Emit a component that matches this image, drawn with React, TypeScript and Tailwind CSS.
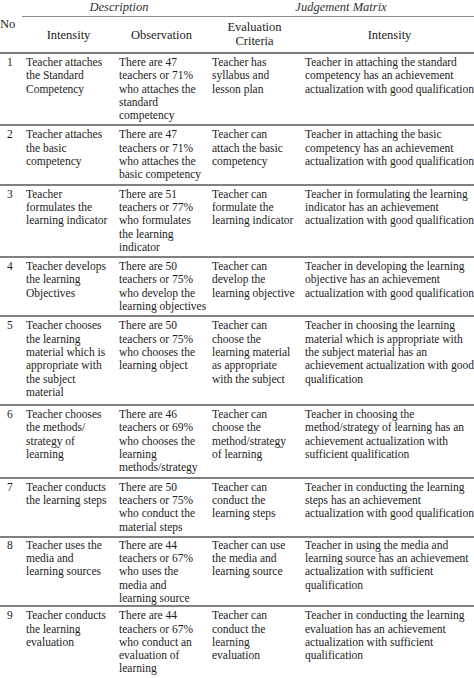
import React from 'react'

type Row = { no: string; a: string[]; b: string[]; c: string[]; d: string[]; pad?: string }

const rows: Row[] = [
  {
    no: '1',
    a: ['Teacher attaches', 'the Standard', 'Competency'],
    b: ['There are 47', 'teachers or 71%', 'who attaches the', 'standard', 'competency'],
    c: ['Teacher has', 'syllabus and', 'lesson plan'],
    d: ['Teacher in attaching the standard', 'competency has an achievement', 'actualization with good qualification.'],
  },
  {
    no: '2',
    a: ['Teacher attaches', 'the basic', 'competency'],
    b: ['There are 47', 'teachers or 71%', 'who attaches the', 'basic competency'],
    c: ['Teacher can', 'attach the basic', 'competency'],
    d: ['Teacher in attaching the basic', 'competency has an achievement', 'actualization with good qualification.'],
  },
  {
    no: '3',
    a: ['Teacher', 'formulates the', 'learning indicator'],
    b: ['There are 51', 'teachers or 77%', 'who formulates', 'the learning', 'indicator'],
    c: ['Teacher can', 'formulate the', 'learning indicator'],
    d: ['Teacher in formulating the learning', 'indicator has an achievement', 'actualization with good qualification.'],
  },
  {
    no: '4',
    a: ['Teacher develops', 'the learning', 'Objectives'],
    b: ['There are 50', 'teachers or 75%', 'who develop the', 'learning objectives'],
    c: ['Teacher can', 'develop the', 'learning objective'],
    d: ['Teacher in developing the learning', 'objective has an achievement', 'actualization with good qualification.'],
  },
  {
    no: '5',
    a: ['Teacher chooses', 'the learning', 'material which is', 'appropriate with', 'the subject', 'material'],
    b: ['There are 50', 'teachers or 75%', 'who chooses the', 'learning object'],
    c: ['Teacher can', 'choose the', 'learning material', 'as appropriate', 'with the subject'],
    d: ['Teacher in choosing the learning', 'material which is appropriate with', 'the subject material has an', 'achievement actualization with good', 'qualification'],
    pad: 'pt-[2px] pb-[5px]',
  },
  {
    no: '6',
    a: ['Teacher chooses', 'the methods/', 'strategy of', 'learning'],
    b: ['There are 46', 'teachers or 69%', 'who chooses the', 'learning', 'methods/strategy'],
    c: ['Teacher can', 'choose the', 'method/strategy', 'of learning'],
    d: ['Teacher in choosing the', 'method/strategy of learning has an', 'achievement actualization with', 'sufficient qualification'],
  },
  {
    no: '7',
    a: ['Teacher conducts', 'the learning steps'],
    b: ['There are 50', 'teachers or 75%', 'who conduct the', 'material steps'],
    c: ['Teacher can', 'conduct the', 'learning steps'],
    d: ['Teacher in conducting the learning', 'steps has an achievement', 'actualization with good qualification.'],
  },
  {
    no: '8',
    a: ['Teacher uses the', 'media and', 'learning sources'],
    b: ['There are 44', 'teachers or 67%', 'who uses the', 'media and', 'learning source'],
    c: ['Teacher can use', 'the media and', 'learning source'],
    d: ['Teacher in using the media and', 'learning source has an achievement', 'actualization with sufficient', 'qualification'],
    pad: 'pt-[1px] pb-0',
  },
  {
    no: '9',
    a: ['Teacher conducts', 'the learning', 'evaluation'],
    b: ['There are 44', 'teachers or 67%', 'who conduct an', 'evaluation of', 'learning'],
    c: ['Teacher can', 'conduct the', 'learning', 'evaluation'],
    d: ['Teacher in conducting the learning', 'evaluation has an achievement', 'actualization with sufficient', 'qualification'],
  },
]

function Lines({ lines }: { lines: string[] }) {
  return (
    <>
      {lines.map((l, i) => (
        <div key={i} className="whitespace-nowrap">
          {l}
        </div>
      ))}
    </>
  )
}

export default function App() {
  return (
    <div className="w-[474px] h-[678px] overflow-hidden bg-white text-[#1c1c1c] font-['Liberation_Serif',serif]">
      <table className="table-fixed border-collapse w-[474px] text-[11.5px] leading-[13.3px]">
        <colgroup>
          <col className="w-[22px]" />
          <col className="w-[93px]" />
          <col className="w-[93px]" />
          <col className="w-[93px]" />
          <col className="w-[173px]" />
        </colgroup>
        <thead className="text-[12.5px]">
          <tr className="h-[16px]">
            <th rowSpan={2} className="align-middle text-left font-normal pl-0 pb-[2px] border-b-2 border-[#7a7a7a]">
              No
            </th>
            <th colSpan={2} className="italic font-light text-[#333] text-center pl-[8px] leading-[15px] border-b border-[#8a8a8a]">
              Description
            </th>
            <th colSpan={2} className="italic font-light text-[#333] text-center leading-[15px] border-b border-[#8a8a8a]">
              Judgement Matrix
            </th>
          </tr>
          <tr className="h-[37px]">
            <th className="font-normal text-center align-middle pt-[2px] border-b-2 border-[#7a7a7a]">Intensity</th>
            <th className="font-normal text-center align-middle pt-[2px] border-b-2 border-[#7a7a7a]">Observation</th>
            <th className="font-normal text-center align-middle leading-[14px] border-b-2 border-[#7a7a7a]">
              Evaluation
              <br />
              Criteria
            </th>
            <th className="font-normal text-center align-middle pl-[4px] pt-[2px] border-b-2 border-[#7a7a7a]">Intensity</th>
          </tr>
        </thead>
        <tbody>
          {rows.map((r) => {
            const pad = r.pad ?? 'pt-[2px] pb-[2px]'
            const cell = `align-top pl-[4px] text-left ${pad}`
            return (
              <tr key={r.no} className="border-b-2 border-[#808080]">
                <td className={`align-top pl-[7px] ${pad}`}>{r.no}</td>
                <td className={cell}>
                  <Lines lines={r.a} />
                </td>
                <td className={cell}>
                  <Lines lines={r.b} />
                </td>
                <td className={cell}>
                  <Lines lines={r.c} />
                </td>
                <td className={cell}>
                  <Lines lines={r.d} />
                </td>
              </tr>
            )
          })}
        </tbody>
      </table>
    </div>
  )
}
